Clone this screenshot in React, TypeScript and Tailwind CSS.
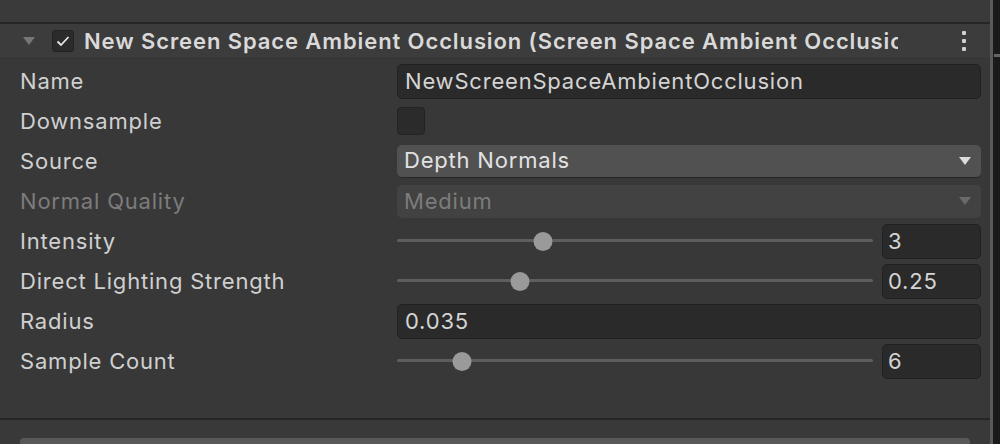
import React from "react";

type Row =
  | { kind: "text"; label: string; value: string }
  | { kind: "check"; label: string }
  | { kind: "select"; label: string; value: string; disabled?: boolean }
  | { kind: "slider"; label: string; value: string; knob: number };

const rows: Row[] = [
  { kind: "text", label: "Name", value: "NewScreenSpaceAmbientOcclusion" },
  { kind: "check", label: "Downsample" },
  { kind: "select", label: "Source", value: "Depth Normals" },
  { kind: "select", label: "Normal Quality", value: "Medium", disabled: true },
  { kind: "slider", label: "Intensity", value: "3", knob: 146 },
  { kind: "slider", label: "Direct Lighting Strength", value: "0.25", knob: 123 },
  { kind: "text", label: "Radius", value: "0.035" },
  { kind: "slider", label: "Sample Count", value: "6", knob: 65 },
];

function Caret({ color }: { color: string }) {
  return (
    <svg width="14" height="10" viewBox="0 0 14 10">
      <path d="M1 1 L13 1 L7 9 Z" fill={color} />
    </svg>
  );
}

function Field({ row }: { row: Row }) {
  if (row.kind === "text") {
    return (
      <div className="flex h-[35px] flex-1 items-center rounded-[5px] border border-[#212121] bg-[#2a2a2a] px-[7px] text-[#d4d4d4]">
        {row.value}
      </div>
    );
  }
  if (row.kind === "check") {
    return <div className="h-[28px] w-[28px] rounded-[4px] border border-[#232323] bg-[#2b2b2b]" />;
  }
  if (row.kind === "select") {
    return (
      <div
        className={
          row.disabled
            ? "flex h-[33px] flex-1 items-center justify-between rounded-[5px] bg-[#424242] pl-[7px] pr-[9px] text-[#7c7c7c]"
            : "flex h-[33px] flex-1 items-center justify-between rounded-[5px] border-b border-[#262626] bg-[#515151] pl-[7px] pr-[9px] text-[#e2e2e2]"
        }
      >
        <span>{row.value}</span>
        <Caret color={row.disabled ? "#6a6a6a" : "#dcdcdc"} />
      </div>
    );
  }
  return (
    <div className="flex flex-1 items-center gap-[9px]">
      <div className="relative h-[18px] flex-1">
        <div className="absolute left-0 right-0 top-[7px] h-[3px] rounded-full bg-[#5e5e5e]" />
        <div
          className="absolute top-0 h-[19px] w-[19px] -translate-x-1/2 rounded-full bg-[#9a9a9a]"
          style={{ left: row.knob }}
        />
      </div>
      <div className="flex h-[35px] w-[99px] items-center rounded-[5px] border border-[#212121] bg-[#2a2a2a] px-[5px] text-[#d4d4d4]">
        {row.value}
      </div>
    </div>
  );
}

export default function App() {
  return (
    <div className="flex h-[444px] w-[1000px] overflow-hidden bg-[#383838] font-['Inter',sans-serif] text-[22px] tracking-[0.8px]">
      <div className="flex flex-1 flex-col">
        <div className="h-[22px] bg-[#3a3a3a]" />
        <div className="h-[2px] bg-[#262626]" />
        <div className="flex h-[34px] items-center bg-[#3c3c3c] pl-[22px] pr-[24px]">
          <Caret color="#767676" />
          <div className="ml-[16px] flex h-[22px] w-[22px] items-center justify-center rounded-[3px] border border-[#222] bg-[#2b2b2b]">
            <svg width="14" height="12" viewBox="0 0 14 12">
              <path d="M1.5 6.5 L5 10 L12.5 2" fill="none" stroke="#e6e6e6" strokeWidth="1.8" />
            </svg>
          </div>
          <div className="ml-[10px] w-[814px] overflow-hidden whitespace-nowrap font-semibold tracking-[0.9px] text-[#d9d9d9]">
            New Screen Space Ambient Occlusion (Screen Space Ambient Occlusion)
          </div>
          <div className="ml-auto flex flex-col gap-[4px]">
            <span className="h-[4px] w-[4px] rounded-[1px] bg-[#d0d0d0]" />
            <span className="h-[4px] w-[4px] rounded-[1px] bg-[#d0d0d0]" />
            <span className="h-[4px] w-[4px] rounded-[1px] bg-[#d0d0d0]" />
          </div>
        </div>
        <div className="h-[1px] bg-[#333]" />
        <div className="flex flex-col pl-[20px] pr-[9px] pt-[2px]">
          {rows.map((row) => (
            <div key={row.label} className="flex h-[40px] items-center">
              <div
                className={
                  row.kind === "select" && row.disabled
                    ? "w-[377px] text-[#7c7c7c]"
                    : "w-[377px] text-[#d0d0d0]"
                }
              >
                {row.label}
              </div>
              <Field row={row} />
            </div>
          ))}
        </div>
        <div className="mt-auto h-[2px] bg-[#262626]" />
        <div className="h-[24px] bg-[#393939] px-[20px] pt-[18px]">
          <div className="h-[6px] rounded-t-[4px] bg-[#585858]" />
        </div>
      </div>
      <div className="w-[3px] bg-[#5a5a5a]" />
      <div className="relative w-[7px] bg-[#1a1a1a]">
        <div className="absolute left-[1px] right-0 top-[54px] h-[3px] bg-[#666]" />
      </div>
    </div>
  );
}
